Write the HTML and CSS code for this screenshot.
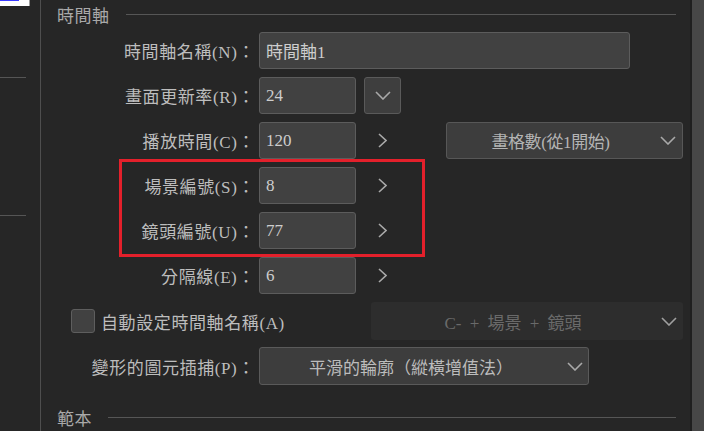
FILE: index.html
```html
<!DOCTYPE html>
<html lang="zh-Hant">
<head>
<meta charset="utf-8">
<link rel="stylesheet" href="styles.css">
</head>
<body>
<div class="sidebar">
  <div class="tab-stub"><div class="tab-blue"></div></div>
  <div class="side-line first"></div>
  <div class="side-line second"></div>
</div>
<div class="panel">
  <div class="section-head"><span class="section-title">時間軸</span><span class="section-rule"></span></div>
  <div class="rows">
    <div class="row">
      <label class="lbl">時間軸名稱(N)：</label>
      <div class="field wide">時間軸1</div>
    </div>
    <div class="row">
      <label class="lbl">畫面更新率(R)：</label>
      <div class="field num">24</div>
      <div class="sq-btn framed">
        <svg width="16" height="9" viewBox="0 0 16 9"><polyline points="1,1 8,8 15,1" class="chev"/></svg>
      </div>
    </div>
    <div class="row">
      <label class="lbl">播放時間(C)：</label>
      <div class="field num">120</div>
      <div class="sq-btn">
        <svg width="9" height="15" viewBox="0 0 9 15"><polyline points="1,1 8,7.5 1,14" class="chev"/></svg>
      </div>
      <div class="select frames">
        <span class="select-text">畫格數(從1開始)</span>
        <span class="select-arrow w28"><svg width="16" height="9" viewBox="0 0 16 9"><polyline points="1,1 8,8 15,1" class="chev"/></svg></span>
      </div>
    </div>
    <div class="row">
      <label class="lbl">場景編號(S)：</label>
      <div class="field num">8</div>
      <div class="sq-btn">
        <svg width="9" height="15" viewBox="0 0 9 15"><polyline points="1,1 8,7.5 1,14" class="chev"/></svg>
      </div>
    </div>
    <div class="row">
      <label class="lbl">鏡頭編號(U)：</label>
      <div class="field num">77</div>
      <div class="sq-btn">
        <svg width="9" height="15" viewBox="0 0 9 15"><polyline points="1,1 8,7.5 1,14" class="chev"/></svg>
      </div>
    </div>
    <div class="row">
      <label class="lbl">分隔線(E)：</label>
      <div class="field num">6</div>
      <div class="sq-btn">
        <svg width="9" height="15" viewBox="0 0 9 15"><polyline points="1,1 8,7.5 1,14" class="chev"/></svg>
      </div>
    </div>
    <div class="row tall check-row">
      <span class="checkbox"></span>
      <span class="check-label">自動設定時間軸名稱(A)</span>
      <div class="select disabled">
        <span class="select-text">C- + 場景 + 鏡頭</span>
        <span class="select-arrow w28"><svg width="16" height="9" viewBox="0 0 16 9"><polyline points="1,1 8,8 15,1" class="chev"/></svg></span>
      </div>
    </div>
    <div class="row tall interp-row">
      <label class="lbl">變形的圖元插捕(P)：</label>
      <div class="select interp">
        <span class="select-text">平滑的輪廓（縱橫增值法）</span>
        <span class="select-arrow w26"><svg width="16" height="9" viewBox="0 0 16 9"><polyline points="1,1 8,8 15,1" class="chev"/></svg></span>
      </div>
    </div>
  </div>
  <div class="section-head second-head"><span class="section-title">範本</span><span class="section-rule"></span></div>
  <div class="highlight"></div>
</div>
<div class="gutter"></div>
<div class="scrollbar"></div>
</body>
</html>
```

FILE: styles.css
```css
html, body {
  margin: 0;
  padding: 0;
}
body {
  width: 704px;
  height: 431px;
  overflow: hidden;
  display: flex;
  background: #262626;
  font-family: "Liberation Serif", "Noto Sans CJK TC", serif;
  color: #bcbcbc;
}
.sidebar {
  width: 40px;
  flex: none;
  border-right: 1px solid #4e4e4e;
}
.tab-stub {
  width: 30px;
  height: 6px;
  background: #ffffff;
  border-right: 1px solid #9a9a9a;
  box-sizing: border-box;
}
.tab-blue {
  width: 19px;
  height: 1px;
  background: #3b3bff;
}
.side-line {
  width: 26px;
  height: 1px;
  background: #555555;
}
.side-line.first { margin-top: 71px; }
.side-line.second { margin-top: 137px; }

.panel {
  position: relative;
  width: 649px;
  flex: none;
  padding-right: 7px;
  box-sizing: border-box;
}
.section-head {
  display: flex;
  align-items: center;
  height: 28px;
  padding-left: 16px;
}
.section-title {
  font-family: "Noto Sans CJK TC", sans-serif;
  font-size: 17px;
  letter-spacing: 0.5px;
  color: #a9a9a9;
}
.section-rule {
  flex: 1;
  height: 1px;
  background: #565656;
  margin-left: 16px;
  margin-right: 7px;
}
.second-head { margin-top: 18px; }

.rows {
  margin-top: 4px;
  display: flex;
  flex-direction: column;
  gap: 8px;
}
.row {
  display: flex;
  align-items: center;
  height: 37px;
}
.row.tall { height: 38px; }
.interp-row { margin-top: -1px; }
.lbl {
  width: 214px;
  flex: none;
  text-align: right;
  margin-right: 4px;
  font-size: 17px;
  letter-spacing: 0.6px;
  color: #bdbdbd;
  white-space: nowrap;
}
.field {
  height: 37px;
  box-sizing: border-box;
  background: #414141;
  border: 1px solid #5c5c5c;
  border-radius: 3px;
  padding-left: 6px;
  display: flex;
  align-items: center;
  font-size: 17px;
  color: #cdcdcd;
  flex: none;
}
.field.wide { width: 371px; }
.field.num { width: 97px; }
.sq-btn {
  width: 37px;
  height: 37px;
  margin-left: 8px;
  box-sizing: border-box;
  display: flex;
  align-items: center;
  justify-content: center;
  flex: none;
}
.sq-btn.framed {
  background: #3e3e3e;
  border: 1px solid #5a5a5a;
  border-radius: 3px;
}
.chev {
  fill: none;
  stroke: #a9a9a9;
  stroke-width: 1.6;
}
.select {
  display: flex;
  align-items: center;
  height: 100%;
  box-sizing: border-box;
  border-radius: 3px;
  font-size: 17px;
  flex: none;
}
.select.frames {
  margin-left: auto;
  width: 237px;
  background: #3d3d3d;
  border: 1px solid #575757;
  color: #b4b4b4;
  letter-spacing: -0.4px;
}
.select.disabled {
  margin-left: auto;
  width: 312px;
  background: #2d2d2d;
  color: #6a6a6a;
  word-spacing: 4px;
}
.select.disabled .chev { stroke: #a0a0a0; }
.select.interp {
  width: 330px;
  background: #3d3d3d;
  border: 1px solid #5a5a5a;
  color: #bcbcbc;
}
.select-text {
  flex: 1;
  text-align: center;
  white-space: nowrap;
}
.select-arrow {
  display: flex;
  align-items: center;
  justify-content: center;
  flex: none;
}
.select-arrow.w28 { width: 28px; }
.select-arrow.w26 { width: 26px; }

.checkbox {
  width: 24px;
  height: 24px;
  margin-left: 30px;
  box-sizing: border-box;
  background: #414141;
  border: 1px solid #5e5e5e;
  border-radius: 3px;
  flex: none;
}
.check-label {
  margin-left: 6px;
  font-size: 17px;
  letter-spacing: 0.6px;
  color: #bdbdbd;
  white-space: nowrap;
}

.highlight {
  position: absolute;
  left: 78px;
  top: 159px;
  width: 306px;
  height: 98px;
  box-sizing: border-box;
  border: 3px solid #e3202b;
}
.gutter {
  width: 2px;
  flex: none;
  background: #1f1f1f;
}
.scrollbar {
  width: 12px;
  flex: none;
  background: #474747;
}
```
